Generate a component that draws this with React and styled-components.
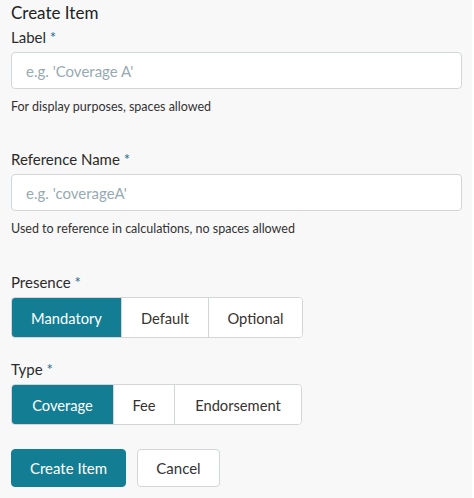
import React, { useState } from "react";
import styled, { createGlobalStyle } from "styled-components";

const GlobalStyle = createGlobalStyle`
  body {
    margin: 0;
    background: #ffffff;
    font-family: "Lato", "Open Sans", sans-serif;
    color: #2b2b2b;
  }
`

const Page = styled.div`
  width: 472px;
  height: 498px;
  background: #f8f8f8;
  box-sizing: border-box;
  padding: 2px 10px 0 11px;
`

const Title = styled.h2`
  margin: 0;
  font-size: 17px;
  font-weight: 400;
  line-height: 22px;
  color: #222;
`

const Field = styled.div`
  display: flex;
  flex-direction: column;
  margin-top: ${p => p.top}px;
`

const Label = styled.label`
  font-size: 15px;
  line-height: 20px;
  color: #2b2b2b;
  > span {
    color: #1b6a90;
  }
`

const Input = styled.input`
  box-sizing: border-box;
  margin-top: 5px;
  width: 451px;
  height: 37px;
  border: 1px solid #d3d6d9;
  border-radius: 4px;
  background: #fff;
  padding: 0 14px;
  font-family: inherit;
  font-size: 15px;
  outline: none;
  &::placeholder {
    color: #97aab1;
  }
`

const Hint = styled.div`
  margin-top: 10px;
  font-size: 12.5px;
  line-height: 16px;
  color: #333;
`

const Group = styled.div`
  display: flex;
  margin-top: 5px;
  height: 39px;
  width: fit-content;
  border: 1px solid #d3d6d9;
  border-radius: 4px;
  background: #fff;
  overflow: hidden;
`

const Segment = styled.button`
  width: ${p => p.w}px;
  border: none;
  border-left: 1px solid #d3d6d9;
  background: ${p => (p.active ? "#137d94" : "#fff")};
  color: ${p => (p.active ? "#fff" : "#333")};
  font-family: inherit;
  font-size: 14.7px;
  padding: 0;
  cursor: pointer;
  &:first-child {
    border-left: none;
  }
`

const Actions = styled.div`
  display: flex;
  gap: 11px;
  margin-top: 24px;
`

const Button = styled.button`
  box-sizing: border-box;
  width: ${p => p.w}px;
  height: 38px;
  border-radius: 4px;
  font-family: inherit;
  font-size: 15px;
  border: 1px solid ${p => (p.primary ? "#137d94" : "#d3d6d9")};
  background: ${p => (p.primary ? "#137d94" : "#fff")};
  color: ${p => (p.primary ? "#fff" : "#333")};
  cursor: pointer;
`

function Segmented({ options, value, onChange }) {
  return (
    <Group>
      {options.map(o => (
        <Segment key={o.label} w={o.w} active={value === o.label} onClick={() => onChange(o.label)}>
          {o.label}
        </Segment>
      ))}
    </Group>
  )
}

export default function App() {
  const [presence, setPresence] = useState("Mandatory")
  const [type, setType] = useState("Coverage")

  return (
    <Page>
      <GlobalStyle />
      <Title>Create Item</Title>

      <Field top={3}>
        <Label>Label <span>*</span></Label>
        <Input placeholder="e.g. 'Coverage A'" />
        <Hint>For display purposes, spaces allowed</Hint>
      </Field>

      <Field top={34}>
        <Label>Reference Name <span>*</span></Label>
        <Input placeholder="e.g. 'coverageA'" />
        <Hint>Used to reference in calculations, no spaces allowed</Hint>
      </Field>

      <Field top={35}>
        <Label>Presence <span>*</span></Label>
        <Segmented
          value={presence}
          onChange={setPresence}
          options={[
            { label: "Mandatory", w: 109 },
            { label: "Default", w: 87 },
            { label: "Optional", w: 94 },
          ]}
        />
      </Field>

      <Field top={21}>
        <Label>Type <span>*</span></Label>
        <Segmented
          value={type}
          onChange={setType}
          options={[
            { label: "Coverage", w: 101 },
            { label: "Fee", w: 61 },
            { label: "Endorsement", w: 127 },
          ]}
        />
      </Field>

      <Actions>
        <Button primary w={115}>Create Item</Button>
        <Button w={83}>Cancel</Button>
      </Actions>
    </Page>
  )
}
